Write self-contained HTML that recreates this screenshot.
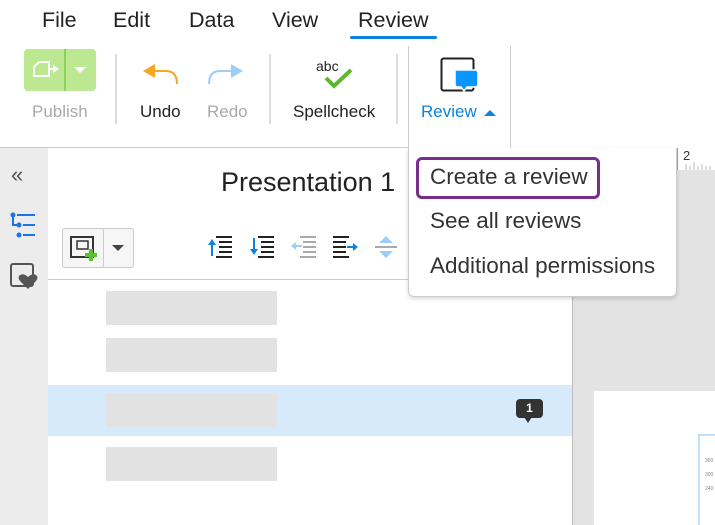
<!DOCTYPE html>
<html><head><meta charset="utf-8"><style>
*{margin:0;padding:0;box-sizing:border-box}
body{width:715px;height:525px;position:relative;overflow:hidden;background:#fff;font-family:"Liberation Sans",sans-serif;color:#222}
.a{position:absolute}
.m{font-size:21.5px;top:8px;color:#222}
.lbl{font-size:17px;top:102px}
.sep{width:2px;height:70px;background:#ddd;top:54px}
.bar{left:106px;width:171px;height:34px;background:#e2e2e2}
.it{left:430px;font-size:22.5px;color:#333}
</style></head><body>
<div class="a m" style="left:42px">File</div>
<div class="a m" style="left:113px">Edit</div>
<div class="a m" style="left:189px">Data</div>
<div class="a m" style="left:272px">View</div>
<div class="a m" style="left:358px">Review</div>
<div class="a" style="left:350px;top:36px;width:87px;height:3px;border-radius:2px;background:#0a84e0"></div>

<div class="a" style="left:0;top:147px;width:409px;height:1px;background:#ccc"></div>
<div class="a" style="left:24px;top:49px;width:72px;height:42px;background:#bde892;border-radius:4px"></div>
<div class="a" style="left:64px;top:49px;width:2px;height:42px;background:#8fd05a"></div>
<svg class="a" style="left:32px;top:60px" width="30" height="20"><path d="M2 7 L7 2 H17 V16 H2 Z" fill="none" stroke="#fff" stroke-width="2"/><path d="M17 9 H21" stroke="#fff" stroke-width="2"/><path d="M21 5 L27 9 L21 13 Z" fill="#fff"/></svg>
<div class="a" style="left:74px;top:67px;border-left:6px solid transparent;border-right:6px solid transparent;border-top:6px solid #fff"></div>
<div class="a lbl" style="left:32px;color:#aaa">Publish</div>
<div class="a sep" style="left:115px"></div>
<svg class="a" style="left:140px;top:62px" width="40" height="26"><path d="M14 9 H26 Q37 9 37 22" fill="none" stroke="#f6a623" stroke-width="2"/><path d="M3 9 L15 2 V16 Z" fill="#f6a623"/></svg>
<div class="a lbl" style="left:140px;color:#222">Undo</div>
<svg class="a" style="left:206px;top:62px" width="40" height="26"><path d="M26 9 H14 Q3 9 3 22" fill="none" stroke="#9ccdf8" stroke-width="2"/><path d="M37 9 L25 2 V16 Z" fill="#9ccdf8"/></svg>
<div class="a lbl" style="left:207px;color:#aaa">Redo</div>
<div class="a sep" style="left:269px"></div>
<div class="a" style="left:316px;top:58px;font-size:14px;color:#222">abc</div>
<svg class="a" style="left:322px;top:66px" width="32" height="26"><path d="M4 12 L12 20 L29 4" fill="none" stroke="#5cb82c" stroke-width="4"/></svg>
<div class="a lbl" style="left:293px;color:#222">Spellcheck</div>
<div class="a sep" style="left:396px"></div>
<div class="a" style="left:408px;top:46px;width:103px;height:104px;background:#fff;border-left:1px solid #ccc;border-right:1px solid #ccc"></div>
<svg class="a" style="left:440px;top:57px" width="40" height="40"><rect x="1.5" y="1.5" width="32" height="32" rx="2" fill="none" stroke="#222" stroke-width="2"/><path d="M15 13 H35 Q38 13 38 16 V27 Q38 30 35 30 H27 L24 34 L21 30 H18 Q15 30 15 27 Z" fill="#0a95ff" stroke="#fff" stroke-width="1.5"/></svg>
<div class="a lbl" style="left:421px;color:#0a84e0">Review</div>
<div class="a" style="left:484px;top:110px;border-left:6px solid transparent;border-right:6px solid transparent;border-bottom:6px solid #0a84e0"></div>

<div class="a" style="left:0;top:148px;width:48px;height:377px;background:#ececec"></div>
<div class="a" style="left:11px;top:162px;font-size:22px;color:#555">«</div>
<svg class="a" style="left:10px;top:212px" width="28" height="26"><circle cx="3" cy="3" r="2.5" fill="#1a73e8"/><circle cx="9" cy="13" r="2.5" fill="#1a73e8"/><circle cx="9" cy="23" r="2.5" fill="#1a73e8"/><path d="M3 3 V13 H9 M7 3 H25 M13 13 H25 M13 23 H25 M3 3 V13" stroke="#1a73e8" stroke-width="2" fill="none"/></svg>
<svg class="a" style="left:10px;top:263px" width="28" height="28"><rect x="1" y="1" width="22" height="22" rx="2" fill="none" stroke="#555" stroke-width="2"/><path d="M18 26 L10 18 Q7 14 10 12 Q14 10 18 14 Q22 10 26 12 Q29 14 26 18 Z" fill="#555"/></svg>

<div class="a" style="left:572px;top:148px;width:1px;height:377px;background:#bbb"></div>
<div class="a" style="left:573px;top:148px;width:142px;height:377px;background:#e3e3e3"></div>
<div class="a" style="left:594px;top:391px;width:121px;height:134px;background:#fff"></div>
<div class="a" style="left:698px;top:434px;width:17px;height:91px;border-left:2px solid #bfe0fb;border-top:2px solid #bfe0fb;font-size:5px;color:#888;padding:18px 0 0 5px;line-height:14px">360<br>300<br>240</div>
<div class="a" style="left:677px;top:148px;width:38px;height:22px;background:#fff;border-left:1px solid #aaa;font-size:13px;padding-left:5px;color:#333">2</div>
<svg class="a" style="left:685px;top:160px" width="30" height="10"><path d="M1 4V10M5 6V10M9 2V10M13 6V10M17 4V10M21 6V10M25 6V10" stroke="#bbb" stroke-width="1"/></svg>
<div class="a" style="left:221px;top:167px;font-size:27px;color:#222">Presentation 1</div>
<div class="a" style="left:62px;top:228px;width:72px;height:40px;border:1px solid #ccc;border-radius:3px;background:#f6f6f6"></div>
<div class="a" style="left:103px;top:229px;width:1px;height:38px;background:#ccc"></div>
<svg class="a" style="left:70px;top:236px" width="30" height="26"><rect x="1" y="1" width="22" height="20" fill="none" stroke="#333" stroke-width="2"/><rect x="7" y="5" width="11" height="8" fill="none" stroke="#333" stroke-width="1.5"/><path d="M21 13 V25 M15 19 H27" stroke="#5cc12a" stroke-width="4"/></svg>
<div class="a" style="left:112px;top:245px;border-left:6px solid transparent;border-right:6px solid transparent;border-top:6px solid #444"></div>
<svg class="a" style="left:207px;top:236px" width="195" height="26"><g fill="#222"><rect x="9" y="0" width="16" height="2"/><rect x="12" y="5" width="13" height="2"/><rect x="12" y="10" width="13" height="2"/><rect x="12" y="15" width="13" height="2"/><rect x="9" y="20" width="16" height="2"/></g><path d="M5 20 V8" stroke="#0a84e0" stroke-width="2"/><path d="M1 9 L5 3 L9 9Z" fill="#0a84e0"/>
<g transform="translate(42 0)"><g fill="#222"><rect x="9" y="0" width="16" height="2"/><rect x="12" y="5" width="13" height="2"/><rect x="12" y="10" width="13" height="2"/><rect x="12" y="15" width="13" height="2"/><rect x="9" y="20" width="16" height="2"/></g><path d="M5 2 V14" stroke="#0a84e0" stroke-width="2"/><path d="M1 13 L5 19 L9 13Z" fill="#0a84e0"/></g>
<g transform="translate(84 0)"><g fill="#aaa"><rect x="9" y="0" width="16" height="2"/><rect x="12" y="5" width="13" height="2"/><rect x="12" y="10" width="13" height="2"/><rect x="12" y="15" width="13" height="2"/><rect x="9" y="20" width="16" height="2"/></g><path d="M4 10 H11" stroke="#9ccdf8" stroke-width="2"/><path d="M5 6 L0 10 L5 14Z" fill="#9ccdf8"/></g>
<g transform="translate(126 0)"><g fill="#222"><rect x="0" y="0" width="16" height="2"/><rect x="0" y="5" width="13" height="2"/><rect x="0" y="10" width="13" height="2"/><rect x="0" y="15" width="13" height="2"/><rect x="0" y="20" width="16" height="2"/></g><path d="M14 11 H21" stroke="#0a84e0" stroke-width="2"/><path d="M20 7 L25 11 L20 15Z" fill="#0a84e0"/></g>
<g transform="translate(168 0)"><rect x="0" y="10" width="22" height="2" fill="#aaa"/><path d="M4 7 L11 0 L18 7Z M4 15 L11 22 L18 15Z" fill="#9ccdf8"/></g></svg>
<div class="a" style="left:48px;top:279px;width:524px;height:1px;background:#ccc"></div>
<div class="a" style="left:48px;top:385px;width:524px;height:51px;background:#d6eafc"></div>
<div class="a bar" style="top:291px"></div>
<div class="a bar" style="top:338px"></div>
<div class="a bar" style="top:393px"></div>
<div class="a bar" style="top:447px"></div>
<div class="a" style="left:516px;top:399px;width:27px;height:19px;background:#333;border-radius:4px;color:#fff;font-size:12px;font-weight:bold;text-align:center;line-height:19px">1</div>
<div class="a" style="left:524px;top:417px;border-left:4px solid transparent;border-right:4px solid transparent;border-top:6px solid #333"></div>

<div class="a" style="left:408px;top:148px;width:269px;height:149px;background:#fff;border:1px solid #ccc;border-top:none;border-radius:0 0 6px 6px;box-shadow:0 2px 4px rgba(0,0,0,.15)"></div>
<div class="a" style="left:409px;top:146px;width:101px;height:3px;background:#fff"></div>
<div class="a" style="left:416px;top:157px;width:184px;height:42px;border:3px solid #7b2d8e;border-radius:6px"></div>
<div class="a it" style="top:164px">Create a review</div>
<div class="a it" style="top:208px">See all reviews</div>
<div class="a it" style="top:253px">Additional permissions</div>
</body></html>
